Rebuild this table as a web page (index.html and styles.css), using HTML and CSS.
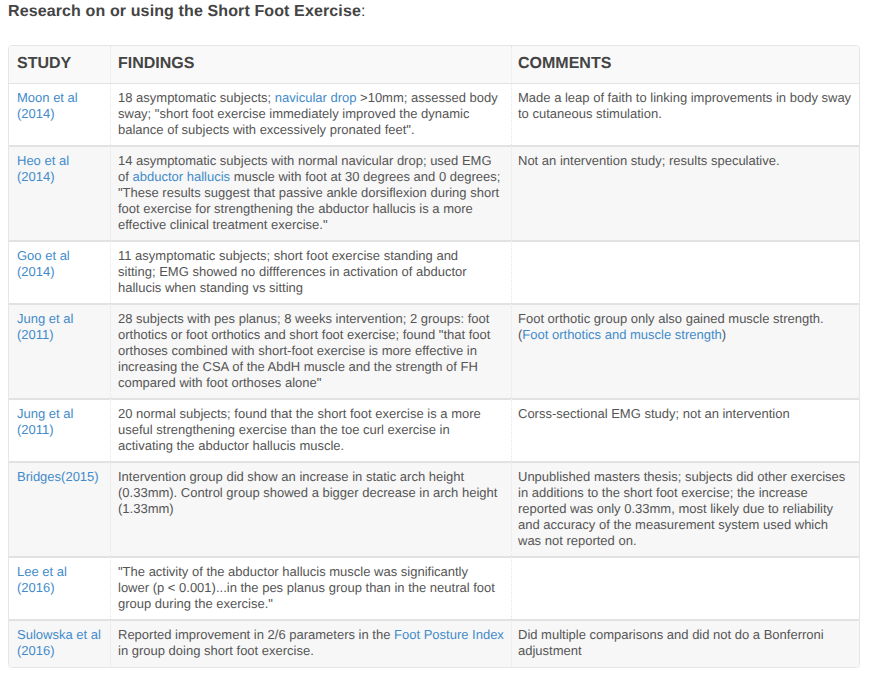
FILE: index.html
```html
<!DOCTYPE html>
<html lang="en">
<head>
<meta charset="utf-8">
<title>Research on or using the Short Foot Exercise</title>
<link rel="stylesheet" href="styles.css">
</head>
<body>
<h2 class="title"><strong>Research on or using the Short Foot Exercise</strong>:</h2>
<div class="table-wrap">
<table class="research">
<colgroup>
<col class="c-study">
<col class="c-findings">
<col class="c-comments">
</colgroup>
<thead>
<tr><th>STUDY</th><th>FINDINGS</th><th>COMMENTS</th></tr>
</thead>
<tbody>
<tr>
<td><a href="#">Moon et al (2014)</a></td>
<td>18 asymptomatic subjects; <a href="#">navicular drop</a> &gt;10mm; assessed body sway; "short foot exercise immediately improved the dynamic balance of subjects with excessively pronated feet".</td>
<td>Made a leap of faith to linking improvements in body sway to cutaneous stimulation.</td>
</tr>
<tr>
<td><a href="#">Heo et al (2014)</a></td>
<td>14 asymptomatic subjects with normal navicular drop; used EMG<br>of <a href="#">abductor hallucis</a> muscle with foot at 30 degrees and 0 degrees; "These results suggest that passive ankle dorsiflexion during short foot exercise for strengthening the abductor hallucis is a more effective clinical treatment exercise."</td>
<td>Not an intervention study; results speculative.</td>
</tr>
<tr>
<td><a href="#">Goo et al (2014)</a></td>
<td>11 asymptomatic subjects; short foot exercise standing and<br>sitting; EMG showed no diffferences in activation of abductor hallucis when standing vs sitting</td>
<td></td>
</tr>
<tr>
<td><a href="#">Jung et al (2011)</a></td>
<td>28 subjects with pes planus; 8 weeks intervention; 2 groups: foot orthotics or foot orthotics and short foot exercise; found "that foot orthoses combined with short-foot exercise is more effective in increasing the CSA of the AbdH muscle and the strength of FH compared with foot orthoses alone"</td>
<td>Foot orthotic group only also gained muscle strength. (<a href="#">Foot orthotics and muscle strength</a>)</td>
</tr>
<tr>
<td><a href="#">Jung et al (2011)</a></td>
<td>20 normal subjects; found that the short foot exercise is a more useful strengthening exercise than the toe curl exercise in activating the abductor hallucis muscle.</td>
<td>Corss-sectional EMG study; not an intervention</td>
</tr>
<tr>
<td><a href="#">Bridges(2015)</a></td>
<td>Intervention group did show an increase in static arch height (0.33mm). Control group showed a bigger decrease in arch height (1.33mm)</td>
<td>Unpublished masters thesis; subjects did other exercises in additions to the short foot exercise; the increase reported was only 0.33mm, most likely due to reliability and accuracy of the measurement system used which was not reported on.</td>
</tr>
<tr>
<td><a href="#">Lee et al (2016)</a></td>
<td>"The activity of the abductor hallucis muscle was significantly<br>lower (p &lt; 0.001)...in the pes planus group than in the neutral foot group during the exercise."</td>
<td></td>
</tr>
<tr>
<td><a href="#">Sulowska et al (2016)</a></td>
<td>Reported improvement in 2/6 parameters in the <a href="#">Foot Posture Index</a> in group doing short foot exercise.</td>
<td>Did multiple comparisons and did not do a Bonferroni adjustment</td>
</tr>
</tbody>
</table>
</div>
</body>
</html>
```

FILE: styles.css
```css
html, body {
  background: #ffffff;
}

body {
  margin: 0;
  padding: 0 8px;
  font-family: "Liberation Sans", Arial, Helvetica, sans-serif;
  font-size: 13px;
  line-height: 16px;
  color: #555555;
  text-rendering: geometricPrecision;
}

.title {
  margin: 3px 0 24px;
  font-size: 16px;
  line-height: 18px;
  font-weight: normal;
  color: #444444;
  letter-spacing: 0.12px;
}

.title strong {
  font-weight: bold;
}

.table-wrap {
  width: 852px;
  box-sizing: border-box;
  border: 1px solid #e6e6e6;
  border-radius: 4px;
  overflow: hidden;
  box-shadow: 0 1px 1px rgba(0, 0, 0, 0.04);
}

.research {
  width: 100%;
  table-layout: fixed;
  border-collapse: separate;
  border-spacing: 0;
}

.c-study { width: 101px; }
.c-findings { width: 401px; }
.c-comments { width: 348px; }

.research th {
  background: #f9f9f9;
  color: #444444;
  font-size: 16px;
  line-height: 18px;
  font-weight: bold;
  text-align: left;
  padding: 9px 6px 10px 7px;
  border-bottom: 1px solid #e4e4e4;
}

.research td {
  vertical-align: top;
  padding: 6px 5px 7px 7px;
  border-top: 2px solid #e2e2e2;
}

.research th:first-child,
.research td:first-child {
  padding-left: 8px;
}

.research th:last-child,
.research td:last-child {
  padding-left: 6px;
  padding-right: 6px;
}

.research th + th,
.research td + td {
  border-left: 1px dotted #e6e6e6;
}

.research tbody tr:first-child td {
  border-top: 0;
}

.research tbody tr:last-child td {
  padding-bottom: 8px;
}

.research tbody tr:nth-child(even) td {
  background: #f7f7f7;
}

.research a {
  color: #428bca;
  text-decoration: none;
}
```
